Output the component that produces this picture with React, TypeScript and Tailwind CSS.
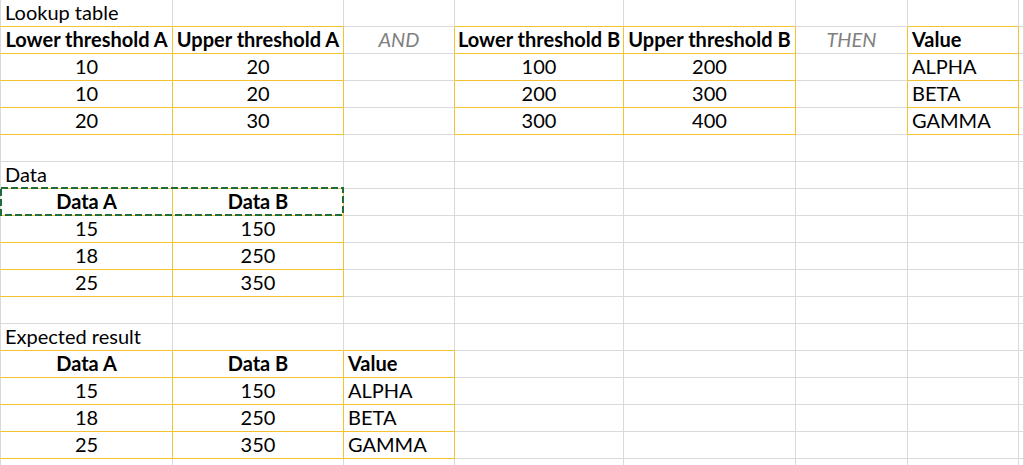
type Cell = {
  text?: string;
  kind?: 'label' | 'head' | 'headLeft' | 'num' | 'left' | 'op';
};

const rows: Cell[][] = [
  [{ text: 'Lookup table', kind: 'label' }],
  [
    { text: 'Lower threshold A', kind: 'head' },
    { text: 'Upper threshold A', kind: 'head' },
    { text: 'AND', kind: 'op' },
    { text: 'Lower threshold B', kind: 'head' },
    { text: 'Upper threshold B', kind: 'head' },
    { text: 'THEN', kind: 'op' },
    { text: 'Value', kind: 'headLeft' },
  ],
  [{ text: '10', kind: 'num' }, { text: '20', kind: 'num' }, {}, { text: '100', kind: 'num' }, { text: '200', kind: 'num' }, {}, { text: 'ALPHA', kind: 'left' }],
  [{ text: '10', kind: 'num' }, { text: '20', kind: 'num' }, {}, { text: '200', kind: 'num' }, { text: '300', kind: 'num' }, {}, { text: 'BETA', kind: 'left' }],
  [{ text: '20', kind: 'num' }, { text: '30', kind: 'num' }, {}, { text: '300', kind: 'num' }, { text: '400', kind: 'num' }, {}, { text: 'GAMMA', kind: 'left' }],
  [],
  [{ text: 'Data', kind: 'label' }],
  [{ text: 'Data A', kind: 'head' }, { text: 'Data B', kind: 'head' }],
  [{ text: '15', kind: 'num' }, { text: '150', kind: 'num' }],
  [{ text: '18', kind: 'num' }, { text: '250', kind: 'num' }],
  [{ text: '25', kind: 'num' }, { text: '350', kind: 'num' }],
  [],
  [{ text: 'Expected result', kind: 'label' }],
  [{ text: 'Data A', kind: 'head' }, { text: 'Data B', kind: 'head' }, { text: 'Value', kind: 'headLeft' }],
  [{ text: '15', kind: 'num' }, { text: '150', kind: 'num' }, { text: 'ALPHA', kind: 'left' }],
  [{ text: '18', kind: 'num' }, { text: '250', kind: 'num' }, { text: 'BETA', kind: 'left' }],
  [{ text: '25', kind: 'num' }, { text: '350', kind: 'num' }, { text: 'GAMMA', kind: 'left' }],
  [],
];

const NUM_COLS = 8;

// yellow bordered blocks: [rowFrom, rowTo, colFrom, colTo]
const blocks = [
  [1, 4, 0, 1],
  [1, 4, 3, 4],
  [1, 4, 6, 6],
  [7, 10, 0, 1],
  [13, 16, 0, 2],
];

const inBlock = (r: number, c: number) =>
  blocks.some(([r0, r1, c0, c1]) => r >= r0 && r <= r1 && c >= c0 && c <= c1);

const textClass = (kind?: Cell['kind']) => {
  switch (kind) {
    case 'label':
      return 'justify-start pl-[4px] text-black';
    case 'head':
      return 'justify-center font-bold text-black';
    case 'headLeft':
      return 'justify-start pl-[4px] font-bold text-black';
    case 'num':
      return 'justify-center text-black';
    case 'left':
      return 'justify-start pl-[4px] text-black';
    case 'op':
      return 'justify-center italic text-[#808080]';
    default:
      return '';
  }
};

function SheetCell({ cell, r, c }: { cell?: Cell; r: number; c: number }) {
  const yellowRight = inBlock(r, c) || inBlock(r, c + 1);
  const yellowBottom = inBlock(r, c) || inBlock(r + 1, c);
  return (
    <div
      className={`flex items-end pb-[4px] h-[27px] overflow-visible whitespace-nowrap border-r border-b ${
        c === 0 ? 'border-l border-l-[#d9d9d9]' : ''
      } ${yellowRight ? 'border-r-[#f2c230]' : 'border-r-[#dadada]'} ${
        yellowBottom ? 'border-b-[#f2c230]' : 'border-b-[#dadada]'
      } ${textClass(cell?.kind)}`}
    >
      {cell?.text}
    </div>
  );
}

export default function App() {
  return (
    <div className="h-[465px] w-[1024px] overflow-hidden bg-white">
      <div
        className="relative grid grid-cols-[173px_171px_111px_169px_172px_112px_111px_1fr] text-[20px] leading-none"
        style={{ fontFamily: 'Lato, "Open Sans", sans-serif' }}
      >
        {rows.map((row, r) =>
          Array.from({ length: NUM_COLS }).map((_, c) => (
            <SheetCell key={`${r}-${c}`} cell={row[c]} r={r} c={c} />
          ))
        )}
        {/* copy selection around Data A / Data B header */}
        <svg
          className="absolute left-0 top-[187px] pointer-events-none"
          width="345"
          height="29"
        >
          <rect
            x="1"
            y="1"
            width="342"
            height="27"
            fill="none"
            stroke="#1e6b41"
            strokeWidth="2"
            strokeDasharray="7 3"
          />
        </svg>
      </div>
    </div>
  );
}
